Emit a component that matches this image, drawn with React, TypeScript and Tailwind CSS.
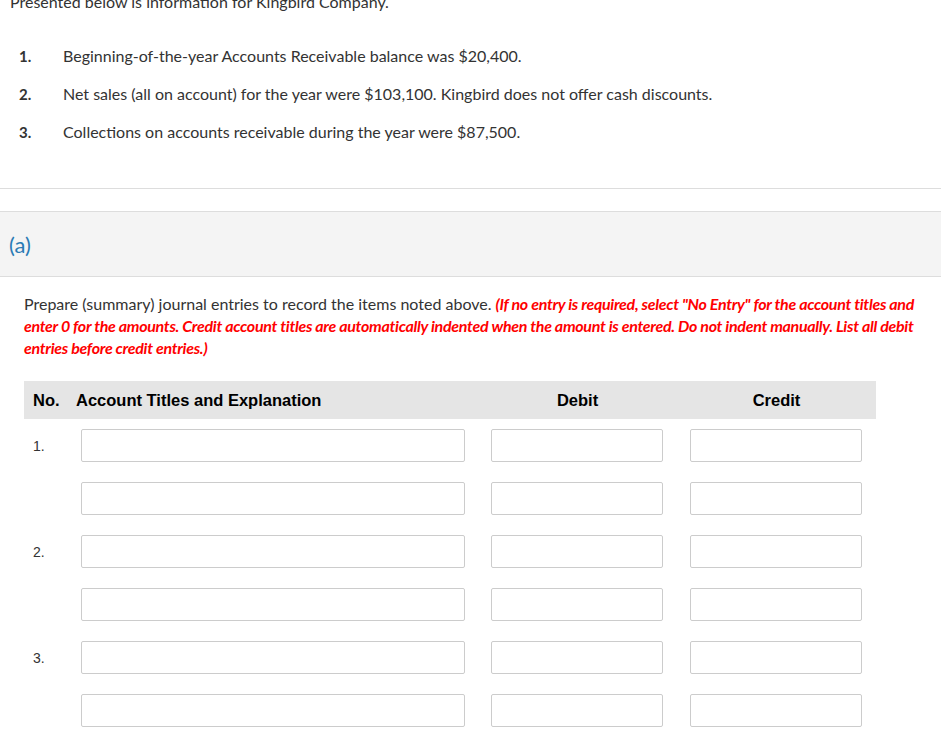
import React from 'react';

const facts = [
    'Beginning-of-the-year Accounts Receivable balance was $20,400.',
    'Net sales (all on account) for the year were $103,100. Kingbird does not offer cash discounts.',
    'Collections on accounts receivable during the year were $87,500.',
];

const rows = [
    { no: '1.' },
    { no: '' },
    { no: '2.' },
    { no: '' },
    { no: '3.' },
    { no: '' },
];

function Box({ className }: { className: string }) {
    return (
        <input
            type="text"
            className={`h-[33px] border border-[#cccccc] rounded-[2px] bg-white ${className}`}
        />
    );
}

export default function App() {
    return (
        <div className="w-[941px] h-[743px] overflow-hidden bg-white text-[#333333] font-['Lato','Liberation_Sans',sans-serif]">
            {/* problem statement */}
            <p className="-mt-[9px] px-[10px] text-[16px] leading-[22px]">
                Presented below is information for Kingbird Company.
            </p>

            <ol className="mt-[24px]">
                {facts.map((f, i) => (
                    <li key={i} className="flex items-center h-[38px] text-[16px]">
                        <span className="w-[63px] pl-[19px] font-bold text-[15px]">{i + 1}.</span>
                        <span>{f}</span>
                    </li>
                ))}
            </ol>

            <div className="mt-[37px] border-t border-[#dddddd]" />

            {/* part header */}
            <div className="mt-[22px] h-[66px] bg-[#f4f4f4] border-y border-[#dddddd] flex items-center px-[9px]">
                <span className="text-[22px] text-[#2b7bb5]">(a)</span>
            </div>

            <div className="px-[24px]">
                <p className="mt-[16px] text-[16px] leading-[22px]">
                    Prepare (summary) journal entries to record the items noted above.{' '}
                    <span className="text-[#ff0000] italic font-bold tracking-[-0.3px]">
                        (If no entry is required, select "No Entry" for the account titles and enter 0 for the amounts. Credit account titles are automatically indented when the amount is entered. Do not indent manually. List all debit entries before credit entries.)
                    </span>
                </p>

                {/* journal table */}
                <div className="mt-[22px] w-[852px]">
                    <div className="grid grid-cols-[44px_410px_199px_199px] h-[38px] items-center bg-[#e5e5e5] text-black font-bold text-[16.5px] font-['Liberation_Sans',sans-serif]">
                        <span className="pl-[9px]">No.</span>
                        <span className="pl-[8px]">Account Titles and Explanation</span>
                        <span className="text-center">Debit</span>
                        <span className="text-center">Credit</span>
                    </div>

                    {rows.map((r, i) => (
                        <div key={i} className="grid grid-cols-[44px_410px_199px_199px] h-[53px] items-center">
                            <span className="pl-[9px] text-[14px] font-['Liberation_Sans',sans-serif] text-[#333333] pt-[2px]">{r.no}</span>
                            <div className="pl-[13px] pr-[13px]">
                                <Box className="w-[384px]" />
                            </div>
                            <div className="pl-[13px]">
                                <Box className="w-[172px]" />
                            </div>
                            <div className="pl-[13px]">
                                <Box className="w-[172px]" />
                            </div>
                        </div>
                    ))}
                </div>
            </div>
        </div>
    );
}
